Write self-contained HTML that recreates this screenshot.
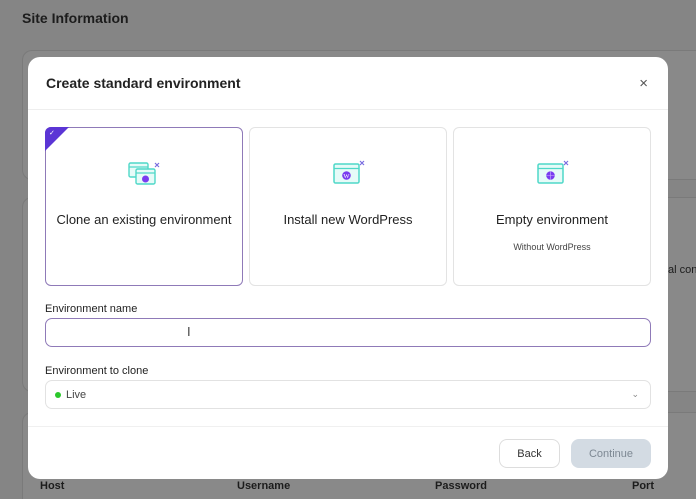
<!DOCTYPE html>
<html style="background:#858585"><head><meta charset="utf-8"><style>
*{box-sizing:border-box;margin:0;padding:0}
html,body{width:696px;height:499px;overflow:hidden;background:#858585}
body{font-family:"Liberation Sans",sans-serif;position:relative;color:#222}
.panel{position:absolute;left:22px;width:674px;border:1px solid #7a7a7a;border-right:none;border-radius:10px 0 0 10px;background:#898989}
.bgtxt{position:absolute;font-size:12px;color:#1c1c1c;font-weight:bold;white-space:nowrap}
.modal{position:absolute;left:28px;top:57px;width:640px;height:422px;background:#fff;border-radius:12px;overflow:hidden}
.hdr{height:53px;border-bottom:1px solid #eee;display:flex;align-items:center;padding:0 18px;font-size:14px;font-weight:bold;color:#222}
.close{position:absolute;right:20px;top:18px;font-size:15px;color:#555}
.card{position:absolute;top:70px;width:198px;height:159px;border:1px solid #e3e3e3;border-radius:6px;text-align:center}
.card.sel{border-color:#8f7ab8}
.card svg{position:absolute;left:82px;top:32px}
.ct{position:absolute;top:84px;left:0;right:0;font-size:13px;color:#222}
.cs{position:absolute;top:114px;left:0;right:0;font-size:9px;color:#444}
.lbl{position:absolute;left:17px;font-size:11px;color:#222}
.inp{position:absolute;left:17px;width:606px;height:29px;border-radius:7px;border:1px solid #e2e2e2}
.foot{position:absolute;left:0;right:0;top:369px;border-top:1px solid #f0f0f0}
.btn{position:absolute;top:382px;height:29px;border-radius:8px;font-size:11px;display:flex;align-items:center;justify-content:center}
</style></head><body>
<div class="bgtxt" style="left:22px;top:10px;font-size:14px">Site Information</div>
<div class="panel" style="top:50px;height:130px"></div>
<div class="panel" style="top:197px;height:195px"></div>
<div class="panel" style="top:412px;height:87px;border-bottom:none;border-radius:10px 0 0 0"></div>
<div class="bgtxt" style="left:668px;top:264px;font-weight:normal;font-size:11px;width:28px;overflow:hidden">al con</div>
<div class="bgtxt" style="left:40px;top:480px;font-size:11px">Host</div>
<div class="bgtxt" style="left:237px;top:480px;font-size:11px">Username</div>
<div class="bgtxt" style="left:435px;top:480px;font-size:11px">Password</div>
<div class="bgtxt" style="left:632px;top:480px;font-size:11px">Port</div>

<div class="modal">
<div class="hdr">Create standard environment</div>
<div class="close">×</div>

<div class="card sel" style="left:17px">
<div style="position:absolute;left:-1px;top:-1px;width:0;height:0;border-top:24px solid #5b35d5;border-right:24px solid transparent;border-top-left-radius:6px"></div>
<div style="position:absolute;left:3px;top:1px;color:#fff;font-size:7px">✓</div>
<svg width="34" height="28" viewBox="0 0 34 28">
<rect x="1" y="3" width="19" height="14" rx="1.5" fill="#e6fbf8" stroke="#4fd8c8" stroke-width="1.4"/>
<line x1="1" y1="7" x2="20" y2="7" stroke="#4fd8c8" stroke-width="1.2"/>
<rect x="8" y="9" width="19" height="15" rx="1.5" fill="#e6fbf8" stroke="#4fd8c8" stroke-width="1.4"/>
<line x1="8" y1="13" x2="27" y2="13" stroke="#4fd8c8" stroke-width="1.2"/>
<circle cx="17.5" cy="19" r="3.5" fill="#7a3cf0"/>
<path d="M27 3l4 4M31 3l-4 4" stroke="#7a6ce0" stroke-width="1.2"/>
</svg>
<div class="ct">Clone an existing environment</div>
</div>

<div class="card" style="left:221px">
<svg width="34" height="28" viewBox="0 0 34 28">
<rect x="2" y="4" width="25" height="19" rx="1.5" fill="#e6fbf8" stroke="#4fd8c8" stroke-width="1.5"/>
<line x1="2" y1="8.5" x2="27" y2="8.5" stroke="#4fd8c8" stroke-width="1.2"/>
<circle cx="14.5" cy="15.5" r="4.3" fill="#7a3cf0"/>
<text x="14.5" y="18" font-size="6.5" text-anchor="middle" fill="#fff" font-family="Liberation Serif">W</text>
<path d="M28 1l4 4M32 1l-4 4" stroke="#7a6ce0" stroke-width="1.2"/>
</svg>
<div class="ct">Install new WordPress</div>
</div>

<div class="card" style="left:425px">
<svg width="34" height="28" viewBox="0 0 34 28">
<rect x="2" y="4" width="25" height="19" rx="1.5" fill="#e6fbf8" stroke="#4fd8c8" stroke-width="1.5"/>
<line x1="2" y1="8.5" x2="27" y2="8.5" stroke="#4fd8c8" stroke-width="1.2"/>
<circle cx="14.5" cy="15.5" r="4.3" fill="#7a3cf0"/>
<path d="M10.2 15.5h8.6M14.5 11.2v8.6" stroke="#c9b5ff" stroke-width=".6"/>
<path d="M28 1l4 4M32 1l-4 4" stroke="#7a6ce0" stroke-width="1.2"/>
</svg>
<div class="ct">Empty environment</div>
<div class="cs">Without WordPress</div>
</div>

<div class="lbl" style="top:246px">Environment name</div>
<div class="inp" style="top:261px;border-color:#8f7ab8"><span style="position:absolute;left:141px;top:5px;font-size:13px;color:#444">I</span></div>
<div class="lbl" style="top:308px">Environment to clone</div>
<div class="inp" style="top:323px"><span style="position:absolute;left:9px;top:11px;width:6px;height:6px;border-radius:50%;background:#2bc82b"></span><span style="position:absolute;left:20px;top:8px;font-size:11px;color:#444">Live</span><span style="position:absolute;right:11px;top:8px;font-size:9px;color:#888">⌄</span></div>

<div class="foot"></div>
<div class="btn" style="left:471px;width:61px;border:1px solid #ddd;color:#333">Back</div>
<div class="btn" style="left:543px;width:80px;background:#d3dbe3;color:#7d8893">Continue</div>
</div>
</body></html>
